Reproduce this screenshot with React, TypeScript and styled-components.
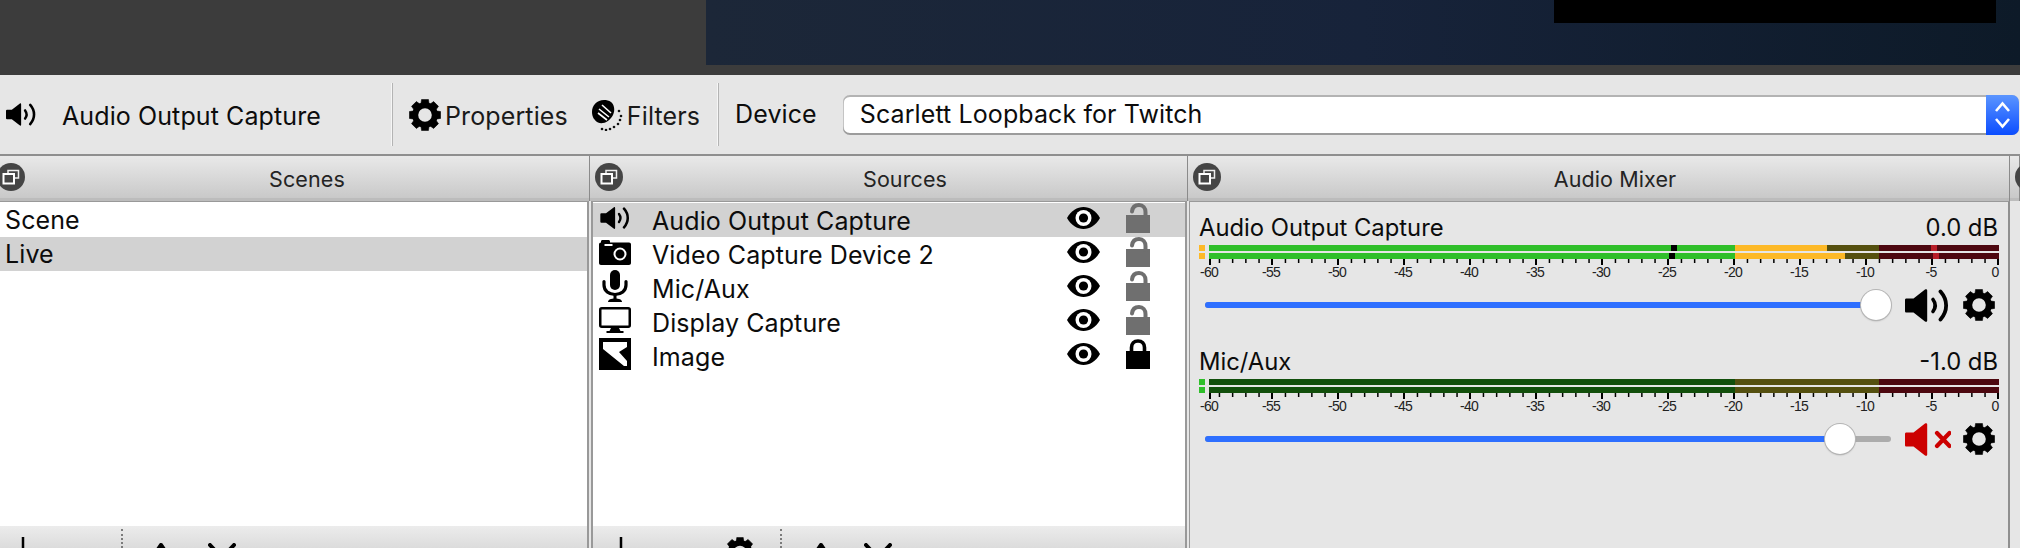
import React from "react";
import styled, { createGlobalStyle } from "styled-components";

const FONT = `Inter, "Liberation Sans", Arial, sans-serif`;

const Global = createGlobalStyle`
  html, body { margin: 0; padding: 0; background: #e6e6e6; overflow: hidden; }
  body { font-family: ${FONT}; color: #0c0c0c; }
`;

const Page = styled.div`
  width: 2020px; height: 548px; overflow: hidden;
  display: flex; flex-direction: column;
`;

/* ---------- preview ---------- */
const PreviewArea = styled.div`
  height: 75px; flex: none; box-sizing: border-box;
  background: #3c3c3c; padding: 0 0 10px 706px; display: flex;
`;
const Preview = styled.div`
  flex: 1; display: flex; justify-content: flex-end; align-items: flex-start;
  background: linear-gradient(90deg, #1c2738 0%, #17233a 50%, #0d1a28 100%);
  padding-right: 24px;
`;
const PreviewBlack = styled.div`
  width: 442px; height: 23px; background: #000;
`;

/* ---------- context bar ---------- */
const ContextBar = styled.div`
  height: 79px; flex: none; display: flex; align-items: center; background: #e6e6e6;
`;
const SourceIcon = styled.div`
  width: 30px; height: 23px; margin-left: 6px; display: flex;
`;
const ContextText = styled.span<{ $left: number; $width?: number; $shift?: number }>`
  margin-left: ${p => p.$left}px;
  margin-top: ${p => p.$shift ?? 0}px;
  width: ${p => (p.$width ? `${p.$width}px` : "auto")};
  font-size: 25px; letter-spacing: 0.1px; white-space: nowrap;
`;
const BarSep = styled.div<{ $left: number }>`
  width: 1px; height: 63px; background: #b4b4b4; margin-left: ${p => p.$left}px;
  border-left: 1px solid #f6f6f6;
`;
const BarButton = styled.div<{ $left: number }>`
  margin-left: ${p => p.$left}px; display: flex; align-items: center; gap: 4px;
  font-size: 25px; letter-spacing: 0.12px; color: #1a1a1a;
`;
const BarLabel = styled.span`
  padding-top: 2px;
`;
const Combo = styled.div`
  width: 1176px; height: 40px; margin-left: 26px; box-sizing: border-box;
  display: flex; align-items: stretch; border-radius: 7px; overflow: hidden;
  background: #fff; box-shadow: inset 0 2px 0 #b3b3b3, inset 0 -2px 0 #9c9c9c, inset 1px 0 0 #c4c4c4;
`;
const ComboText = styled.div`
  flex: 1; display: flex; align-items: center; padding: 0 0 2px 17px;
  font-size: 25px; letter-spacing: 0.1px;
`;
const ComboArrows = styled.div`
  width: 33px; background: linear-gradient(180deg, #5b95ff 0%, #0b4dff 100%);
  display: flex; align-items: center; justify-content: center;
`;

/* ---------- docks ---------- */
const Docks = styled.div`
  flex: 1; display: flex; border-top: 2px solid #8f8f8f; min-height: 0;
`;
const Dock = styled.section<{ $width: number }>`
  width: ${p => p.$width}px; flex: none; display: flex; flex-direction: column; min-height: 0;
`;
const DockTitle = styled.header`
  height: 45px; flex: none; box-sizing: border-box; display: flex; align-items: flex-start;
  border-right: 1px solid #8b8b8b;
  background: linear-gradient(180deg, #e9e9e9 0%, #c9c9c9 93%, #bcbcbc 93%, #bcbcbc 100%);
  padding-top: 7px;
`;
const FloatButton = styled.div<{ $left?: number }>`
  width: 28px; height: 28px; flex: none; margin-left: ${p => p.$left ?? 5}px;
  border-radius: 50%; background: #454545; display: flex; align-items: center; justify-content: center;
`;
const DockName = styled.h2`
  flex: 1; margin: 0; padding-top: 2px; text-align: center; font-weight: 400; font-size: 21.5px; line-height: 28px;
  color: #242424; letter-spacing: 0.1px; white-space: nowrap;
`;
const ListFrame = styled.div<{ $left: number; $right: number }>`
  flex: 1; min-height: 0; background: #fff; display: flex; flex-direction: column;
  border-top: 1px solid #999; padding-top: 1px;
  margin-left: ${p => p.$left}px; margin-right: ${p => p.$right}px;
  border-left: ${p => (p.$left ? "2px solid #999" : "none")};
  border-right: 2px solid #999;
`;
const Row = styled.div<{ $selected?: boolean }>`
  height: 34px; flex: none; display: flex; align-items: center;
  background: ${p => (p.$selected ? "#d2d2d2" : "transparent")};
`;
const SceneLabel = styled.span`
  margin-left: 5px; font-size: 25px; letter-spacing: 0.1px;
`;
const SourceGlyph = styled.div`
  width: 32px; margin: 0 0 4px 6px; flex: none; display: flex; justify-content: center; align-items: center;
`;
const SourceLabel = styled.span`
  margin-left: 21px; width: 415px; padding-top: 2px; flex: none; font-size: 25px; letter-spacing: 0.1px; white-space: nowrap;
`;
const RowIcons = styled.div`
  display: flex; align-items: center; gap: 26px; margin-bottom: 4px;
`;
const Spacer = styled.div`flex: 1;`;
const Footer = styled.footer`
  height: 22px; flex: none; overflow: hidden; display: flex;
  background: linear-gradient(180deg, #ececec 0%, #dcdcdc 100%);
`;
const FooterIcon = styled.div<{ $left: number; $top?: number }>`
  margin-left: ${p => p.$left}px; width: 30px; padding-top: ${p => p.$top ?? 11}px; flex: none; display: flex; justify-content: center;
`;
const DottedSep = styled.div<{ $left: number }>`
  margin-left: ${p => p.$left}px; margin-top: 3px; height: 19px; width: 0; flex: none;
  border-left: 2px dotted #7b7b7b;
`;

/* ---------- mixer ---------- */
const MixerPanel = styled.div`
  flex: 1; min-height: 0; background: #e6e6e6; margin-left: 1px; padding-top: 1px;
  border-top: 1px solid #999; border-left: 1px solid #999; border-right: 2px solid #8f8f8f;
`;
const Channel = styled.div`
  height: 134px; box-sizing: border-box; padding: 10px 9px 0 9px; display: flex; flex-direction: column;
`;
const ChannelHead = styled.div`
  height: 28px; display: flex; justify-content: space-between; align-items: center;
  padding: 0 1px 0 0; box-sizing: border-box; font-size: 23.8px; white-space: nowrap;
`;
const MeterSvg = styled.svg`
  display: block; margin-top: 4px; overflow: visible;
`;
const ScaleLabel = styled.text`
  font-family: "Liberation Sans", Arial, sans-serif; font-size: 14px; letter-spacing: -0.7px; fill: #222;
`;
const Controls = styled.div`
  height: 40px; display: flex; align-items: center; padding-left: 6px;
`;
const SliderTrack = styled.div`
  position: relative; width: 686px; height: 6px; border-radius: 3px; background: #acacac; flex: none;
`;
const SliderFill = styled.div`
  height: 100%; border-radius: 3px 0 0 3px; background: #2e6fff;
`;
const SliderKnob = styled.div`
  position: absolute; top: -12px; width: 30px; height: 30px; margin-left: -15px; border-radius: 50%;
  background: #fff; box-shadow: 0 0 0 1px #b5b5b5, 0 1px 2px rgba(0,0,0,0.3);
`;
const MuteSlot = styled.div`
  width: 46px; margin-left: 14px; flex: none; display: flex;
`;
const GearSlot = styled.div`
  margin-left: 12px; flex: none; display: flex;
`;
const NextTitleRest = styled.div`
  flex: 1; background: #e6e6e6;
`;

/* ---------- icons ---------- */
const Gear = ({ size = 32, color = "#000" }: { size?: number; color?: string }) => (
  <svg width={size} height={size} viewBox="0 0 32 32">
    <circle cx="16" cy="16" r="9.8" fill="none" stroke={color} strokeWidth="6" />
    {[0, 45, 90, 135, 180, 225, 270, 315].map(a => (
      <path key={a} d="M12.6 0.4h6.8l0.8 5h-8.4z" fill={color} stroke={color} strokeWidth="0.6" strokeLinejoin="round" transform={`rotate(${a} 16 16)`} />
    ))}
  </svg>
);

const Speaker = ({ width, height }: { width: number; height: number }) => (
  <svg width={width} height={height} viewBox="0 0 44 33">
    <path d="M1.5 9.5h7L20 .6c1.2-.9 2.2-.4 2.2 1v29.8c0 1.4-1 1.9-2.2 1L8.5 23.5h-7c-1 0-1.5-.5-1.5-1.5V11c0-1 .5-1.5 1.5-1.5z" fill="#000" />
    <path d="M28 10.5c2.8 3.8 2.8 8.2 0 12" fill="none" stroke="#000" strokeWidth="3.6" strokeLinecap="round" />
    <path d="M35.5 2.5c7.5 8.5 7.5 19.5 0 28" fill="none" stroke="#000" strokeWidth="3.8" strokeLinecap="round" />
  </svg>
);

const MutedSpeaker = () => (
  <svg width="46" height="33" viewBox="0 0 46 33">
    <path d="M1.5 9.5h7L20 .6c1.2-.9 2.2-.4 2.2 1v29.8c0 1.4-1 1.9-2.2 1L8.5 23.5h-7c-1 0-1.5-.5-1.5-1.5V11c0-1 .5-1.5 1.5-1.5z" fill="#cc0000" />
    <path d="M32 10l12.5 13M44.5 10L32 23" stroke="#cc0000" strokeWidth="4.2" strokeLinecap="round" />
  </svg>
);

const Camera = () => (
  <svg width="32" height="25" viewBox="0 0 32 25">
    <path d="M2 2.5V1.5C2 .6 2.6 0 3.5 0h6c.9 0 1.5.6 1.5 1.5v1h19c1.2 0 2 .8 2 2V23c0 1.2-.8 2-2 2H2c-1.2 0-2-.8-2-2V4.5c0-1.2.8-2 2-2z" fill="#000" />
    <rect x="5.5" y="4" width="8" height="2" fill="#fff" />
    <circle cx="21" cy="14" r="5.5" fill="none" stroke="#fff" strokeWidth="2" />
  </svg>
);

const Mic = () => (
  <svg width="26" height="32" viewBox="0 0 26 32">
    <rect x="8" y="0" width="10" height="20" rx="5" fill="#000" />
    <path d="M2 11.5v3.5c0 6 5 9.5 11 9.5s11-3.5 11-9.5v-3.5" fill="none" stroke="#000" strokeWidth="3.2" strokeLinecap="round" />
    <rect x="11.5" y="24" width="3" height="5" fill="#000" />
    <path d="M6 32c0-2.5 3-3.5 7-3.5s7 1 7 3.5z" fill="#000" />
  </svg>
);

const Monitor = () => (
  <svg width="32" height="26" viewBox="0 0 32 26">
    <rect x="1.25" y="1.25" width="29.5" height="18.5" rx="1.5" fill="#fff" stroke="#000" strokeWidth="2.5" />
    <path d="M12 21h8l1.5 3h3v2H7.5v-2h3z" fill="#000" />
  </svg>
);

const ImageIcon = () => (
  <svg width="32" height="32" viewBox="0 0 32 32">
    <rect width="32" height="32" fill="#000" />
    <path d="M4 4H28V9L20 14L28 23V28H25L4 11Z" fill="#fff" />
  </svg>
);

const Eye = () => (
  <svg width="33" height="22" viewBox="0 0 33 22">
    <path d="M0 11C4.5 3.5 10 0 16.5 0S28.5 3.5 33 11c-4.5 7.5-10 11-16.5 11S4.5 18.5 0 11z" fill="#000" />
    <circle cx="16.5" cy="11" r="8" fill="#fff" />
    <circle cx="16.5" cy="11" r="4.6" fill="#000" />
  </svg>
);

const Lock = ({ open }: { open: boolean }) => (
  <svg width="24" height="30" viewBox="0 0 24 30">
    <rect x="0" y="12" width="24" height="18" fill={open ? "#6f6f6f" : "#000"} />
    {open ? (
      <path d="M6 8.5C6.5 4 9 2 13 2c4 0 6.5 3 6.5 7v4" fill="none" stroke="#6f6f6f" strokeWidth="4" strokeLinecap="round" />
    ) : (
      <path d="M5.5 13V8.5C5.5 4.5 8 2 12 2s6.5 2.500 6.500 6.500V13" fill="none" stroke="#000" strokeWidth="3.6" />
    )}
  </svg>
);

const FilterIcon = () => (
  <svg width="32" height="32" viewBox="0 0 32 32">
    <path d="M13 1C6 1 1 6 1 13c0 5 2.5 8.5 6 10.5C12 26 19 22 22 16c2.5-5 1-11-2-13-2-1.5-4.5-2-7-2z" fill="#000" />
    <path d="M8 10l10 8M7 14l9 7M11 6l9 8" stroke="#fff" strokeWidth="1.6" />
    {[[30,17],[29,21],[27,25],[23,28],[19,30],[15,31],[11,30],[28,12]].map(([x, y]) => (
      <circle key={`${x}-${y}`} cx={x} cy={y} r="1.3" fill="#111" />
    ))}
  </svg>
);

const Restore = () => (
  <svg width="18" height="16" viewBox="0 0 18 16">
    <path d="M6 4V1.5h10.5V9H13" fill="none" stroke="#eee" strokeWidth="1.5" />
    <rect x="1.5" y="5" width="10.5" height="9.5" fill="none" stroke="#fff" strokeWidth="2" />
  </svg>
);

const Plus = () => (
  <svg width="26" height="26" viewBox="0 0 26 26">
    <path d="M13 0v26M0 13h26" stroke="#000" strokeWidth="2.5" />
  </svg>
);
const Up = () => (
  <svg width="24" height="16" viewBox="0 0 24 16">
    <path d="M3 15L12 2l9 13" fill="none" stroke="#000" strokeWidth="4" strokeLinecap="round" strokeLinejoin="round" />
  </svg>
);
const Down = () => (
  <svg width="28" height="16" viewBox="0 0 28 16">
    <path d="M2 2l12 13L26 2" fill="none" stroke="#000" strokeWidth="4" strokeLinecap="round" strokeLinejoin="round" />
  </svg>
);
const ComboChevrons = () => (
  <svg width="17" height="30" viewBox="0 0 17 30">
    <path d="M2 11L8.5 3.5 15 11M2 19l6.5 7.5L15 19" fill="none" stroke="#fff" strokeWidth="2.6" />
  </svg>
);

/* ---------- meter ---------- */
type Seg = { from: number; to: number; color: string };
const DIM = { green: "#124f0c", yellow: "#55500f", red: "#4d0810" };
const LIT = { green: "#2fbf2a", yellow: "#fdb927", mark: "#b81e28" };

const dbX = (db: number) => 799 + db * 13.2;
const DB_STEPS = Array.from({ length: 61 }, (_, i) => i - 60);

const Meter = ({ clip, bars }: { clip: string; bars: Seg[][] }) => (
  <MeterSvg width="800" height="40" viewBox="0 0 800 40">
    {bars.map((segs, ch) => (
      <g key={ch} transform={`translate(0 ${ch * 8})`}>
        <rect x="0" y="0" width="6" height="6" fill={clip} />
        {segs.map(s => (
          <rect key={`${s.from}-${s.to}-${s.color}`} x={s.from} y="0" width={s.to - s.from} height="6" fill={s.color} />
        ))}
      </g>
    ))}
    {DB_STEPS.map(db => {
      const major = db % 5 === 0;
      const x = db === -60 ? 11 : dbX(db);
      return <rect key={db} x={x - (major ? 1 : 0.5)} y="14" width={major ? 2 : 1.5} height={major ? 6 : 4} fill="#000" />;
    })}
    {DB_STEPS.filter(db => db % 5 === 0).map(db => (
      <ScaleLabel key={db} x={db === 0 ? 796 : db === -60 ? 10 : dbX(db) - 1} y="32" textAnchor="middle">{db}</ScaleLabel>
    ))}
  </MeterSvg>
);

const liveBar = (peak: number, yellowEnd: number, mark: number): Seg[] => [
  { from: 10, to: 536, color: LIT.green },
  { from: peak, to: peak + 6, color: "#000" },
  { from: 536, to: yellowEnd, color: LIT.yellow },
  { from: yellowEnd, to: 680, color: DIM.yellow },
  { from: 680, to: 800, color: DIM.red },
  { from: mark, to: mark + 6, color: LIT.mark },
];
const idleBar: Seg[] = [
  { from: 10, to: 536, color: DIM.green },
  { from: 536, to: 680, color: DIM.yellow },
  { from: 680, to: 800, color: DIM.red },
];

const sources = [
  { name: "Audio Output Capture", icon: <Speaker width={30} height={22} />, locked: false },
  { name: "Video Capture Device 2", icon: <Camera />, locked: false },
  { name: "Mic/Aux", icon: <Mic />, locked: false },
  { name: "Display Capture", icon: <Monitor />, locked: false },
  { name: "Image", icon: <ImageIcon />, locked: true },
];

const channels = [
  {
    name: "Audio Output Capture", value: "0.0 dB", level: 97.8, muted: false,
    clip: LIT.yellow, bars: [liveBar(472, 628, 732), liveBar(470, 646, 734)],
  },
  {
    name: "Mic/Aux", value: "-1.0 dB", level: 92.6, muted: true,
    clip: LIT.green, bars: [idleBar, idleBar],
  },
];

export default function App() {
  return (
    <Page>
      <Global />
      <PreviewArea>
        <Preview><PreviewBlack /></Preview>
      </PreviewArea>

      <ContextBar>
        <SourceIcon><Speaker width={30} height={23} /></SourceIcon>
        <ContextText $left={26} $width={329} $shift={3}>Audio Output Capture</ContextText>
        <BarSep $left={0} />
        <BarButton $left={16}><Gear size={32} /><BarLabel>Properties</BarLabel></BarButton>
        <BarButton $left={23}><FilterIcon /><BarLabel>Filters</BarLabel></BarButton>
        <BarSep $left={17} />
        <ContextText $left={16} $shift={-2}>Device</ContextText>
        <Combo>
          <ComboText>Scarlett Loopback for Twitch</ComboText>
          <ComboArrows><ComboChevrons /></ComboArrows>
        </Combo>
      </ContextBar>

      <Docks>
        <Dock $width={590}>
          <DockTitle>
            <FloatButton $left={-3}><Restore /></FloatButton>
            <DockName>Scenes</DockName>
          </DockTitle>
          <ListFrame $left={0} $right={1}>
            <Row><SceneLabel>Scene</SceneLabel></Row>
            <Row $selected><SceneLabel>Live</SceneLabel></Row>
            <Spacer />
            <Footer>
              <FooterIcon $left={8}><Plus /></FooterIcon>
              <DottedSep $left={83} />
              <FooterIcon $left={23} $top={17}><Up /></FooterIcon>
              <FooterIcon $left={31} $top={17}><Down /></FooterIcon>
            </Footer>
          </ListFrame>
        </Dock>

        <Dock $width={598}>
          <DockTitle>
            <FloatButton><Restore /></FloatButton>
            <DockName>Sources</DockName>
          </DockTitle>
          <ListFrame $left={1} $right={1}>
            {sources.map((s, i) => (
              <Row key={s.name} $selected={i === 0}>
                <SourceGlyph>{s.icon}</SourceGlyph>
                <SourceLabel>{s.name}</SourceLabel>
                <RowIcons>
                  <Eye />
                  <Lock open={!s.locked} />
                </RowIcons>
              </Row>
            ))}
            <Spacer />
            <Footer>
              <FooterIcon $left={13}><Plus /></FooterIcon>
              <FooterIcon $left={89}><Gear size={30} /></FooterIcon>
              <DottedSep $left={25} />
              <FooterIcon $left={24} $top={17}><Up /></FooterIcon>
              <FooterIcon $left={27} $top={17}><Down /></FooterIcon>
            </Footer>
          </ListFrame>
        </Dock>

        <Dock $width={822}>
          <DockTitle>
            <FloatButton><Restore /></FloatButton>
            <DockName>Audio Mixer</DockName>
          </DockTitle>
          <MixerPanel>
            {channels.map(c => (
              <Channel key={c.name}>
                <ChannelHead><span>{c.name}</span><span>{c.value}</span></ChannelHead>
                <Meter clip={c.clip} bars={c.bars} />
                <Controls>
                  <SliderTrack>
                    <SliderFill style={{ width: `${c.level}%` }} />
                    <SliderKnob style={{ left: `${c.level}%` }} />
                  </SliderTrack>
                  <MuteSlot>{c.muted ? <MutedSpeaker /> : <Speaker width={44} height={33} />}</MuteSlot>
                  <GearSlot><Gear size={32} /></GearSlot>
                </Controls>
              </Channel>
            ))}
          </MixerPanel>
        </Dock>

        <Dock $width={10}>
          <DockTitle>
            <FloatButton><Restore /></FloatButton>
          </DockTitle>
          <NextTitleRest />
        </Dock>
      </Docks>
    </Page>
  );
}
